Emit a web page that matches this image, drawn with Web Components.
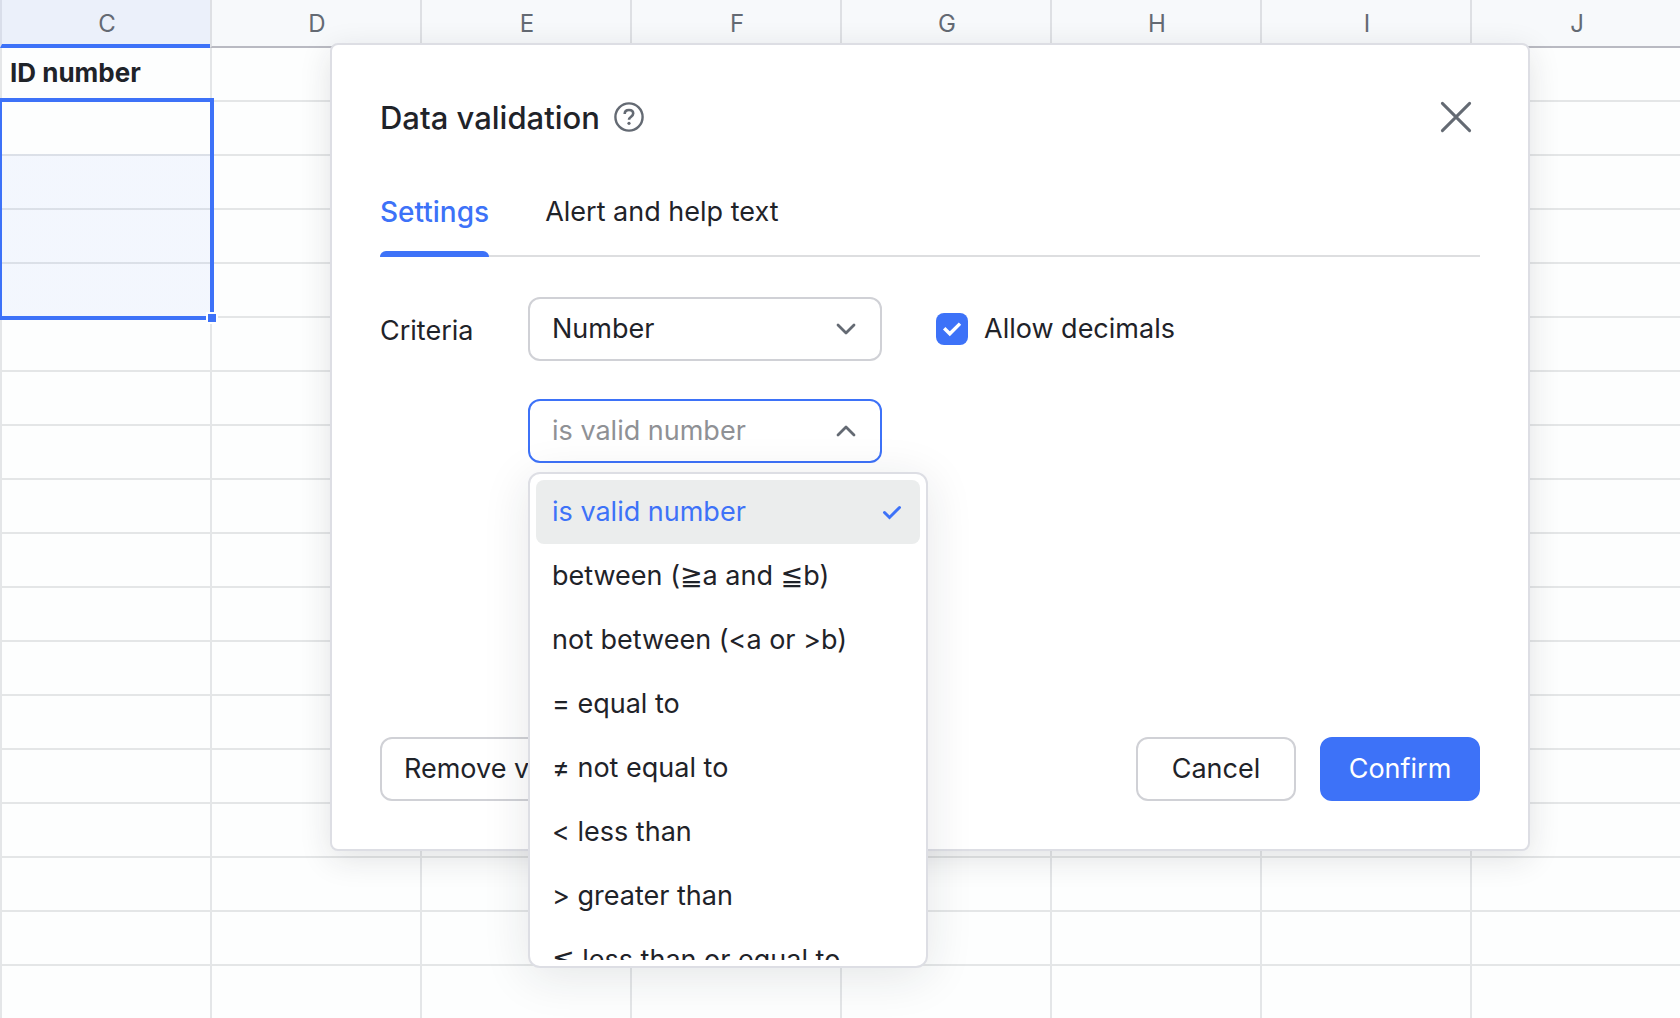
<!DOCTYPE html>
<html lang="en">
<head>
<meta charset="utf-8">
<title>Data validation</title>
<style>
  html, body { margin: 0; height: 100%; }
  body {
    --blue: #3d72f8;
    --ink: #1f2329;
    --muted: #646a73;
    --line: #d0d1d6;
    --edge: #dddee4;
    position: relative;
    overflow: hidden;
    background: #fff;
    color: var(--ink);
    font: 400 27px/40px Inter, "DejaVu Sans", "Noto Sans", sans-serif;
  }
</style>
</head>
<body>
<sheet-grid columns="C D E F G H I J" rows="18"></sheet-grid>
<validation-dialog>
  <span slot="title">Data validation</span>
  <tab-bar slot="tabs"></tab-bar>
  <criteria-form slot="body"></criteria-form>
  <ui-button slot="start">Remove validation</ui-button>
  <ui-button slot="end">Cancel</ui-button>
  <ui-button slot="end" kind="primary">Confirm</ui-button>
</validation-dialog>

<script>
const attach = (el, html) => { el.attachShadow({ mode: "open" }).innerHTML = html; };

customElements.define("sheet-grid", class extends HTMLElement {
  connectedCallback() {
    const cols = this.getAttribute("columns").split(" ");
    const rows = Number(this.getAttribute("rows"));
    const head = cols.map((c, i) => `<th scope="col"${i ? "" : ' class="active"'}>${c}</th>`).join("");
    let body = "";
    for (let r = 0; r < rows; r++) {
      body += "<tr>" + cols.map((c, i) => {
        if (i === 0 && r === 0) return '<td class="label">ID number</td>';
        if (i === 0 && r === 1) return '<td><div class="selection"><i></i></div></td>';
        return "<td></td>";
      }).join("") + "</tr>";
    }
    attach(this, `
      <style>
        :host { display: block; }
        table { width: 100%; table-layout: fixed; border-collapse: separate; border-spacing: 0; }
        th, td { box-sizing: border-box; padding: 0; border-left: 2px solid #e4e6e8; }
        th { height: 48px; padding: 2px 0 0 2px; font-size: 24px; line-height: 44px; font-weight: 400; color: var(--muted);
             background: #f7f9fb; border-left-color: #dee0e4; border-bottom: 2px solid #b9bac2; }
        th.active { padding-top: 4px; background: #ebf0fa; line-height: 40px; border-left-color: #d9deea;
                    border-bottom: 4px solid var(--blue); }
        td { height: 54px; line-height: 52px; position: relative; background: #fdfefe; border-bottom: 2px solid #e4e6e7; }
        .label { padding: 0 0 2px 8px; font-size: 26px; line-height: 50px; font-weight: 700; }
        .selection { position: absolute; z-index: 1; inset: -4px -4px auto; height: 222px; box-sizing: border-box;
                     border: 4px solid var(--blue);
                     background: linear-gradient(transparent 52px, rgba(61, 114, 248, .05) 0) padding-box; }
        .selection i { position: absolute; right: -8px; bottom: -8px; width: 8px; height: 8px;
                       border: 2px solid #fff; background: var(--blue); }
      </style>
      <table><thead><tr>${head}</tr></thead><tbody>${body}</tbody></table>`);
  }
});

customElements.define("ui-button", class extends HTMLElement {
  constructor() {
    super();
    attach(this, `
      <style>
        :host { display: block; }
        button { box-sizing: border-box; min-width: 160px; height: 64px; padding: 0 22px; border: 2px solid var(--line);
                 border-radius: 12px; background: #fff; color: var(--ink); font: inherit; }
        :host([kind="primary"]) button { background: var(--blue); border-color: var(--blue); color: #fff; }
      </style>
      <button type="button"><slot></slot></button>`);
  }
});

customElements.define("tab-bar", class extends HTMLElement {
  constructor() {
    super();
    attach(this, `
      <style>
        :host { display: block; border-bottom: 2px solid #dddee0; }
        div { display: flex; gap: 56px; margin-bottom: -2px; }
        button { position: relative; height: 90px; padding: 0; border: 0; background: none; color: inherit; font: inherit; }
        [aria-selected="true"] { color: var(--blue); font-size: 28px; font-weight: 500; }
        [aria-selected="true"]::after { content: ""; position: absolute; inset: auto 0 0; height: 6px;
                                        border-radius: 6px 6px 0 0; background: var(--blue); }
      </style>
      <div role="tablist">
        <button role="tab" type="button" aria-selected="true">Settings</button>
        <button role="tab" type="button" aria-selected="false">Alert and help text</button>
      </div>`);
  }
});

customElements.define("select-box", class extends HTMLElement {
  connectedCallback() {
    const open = this.hasAttribute("open");
    attach(this, `
      <style>
        :host { display: grid; align-items: center; position: relative; }
        select, svg { grid-area: 1 / 1; }
        select { box-sizing: border-box; width: 100%; height: 64px; padding: 0 60px 0 22px; border: 2px solid var(--line);
                 border-radius: 12px; appearance: none; background: #fff; color: var(--ink); font: inherit; opacity: 1; }
        :host([open]) select { border-color: var(--blue); color: #8f9195; }
        svg { justify-self: end; margin-right: 24px; pointer-events: none; }
      </style>
      <select aria-label="${this.getAttribute("label")}"><option>${this.getAttribute("value")}</option></select>
      <svg width="24" height="24" viewBox="0 0 24 24" fill="none" stroke="#646a73" stroke-width="2.8" stroke-linecap="round" stroke-linejoin="round">
        <path d="${open ? "M4 16l8-8 8 8" : "M4 8l8 8 8-8"}"/>
      </svg>
      <slot></slot>`);
  }
});

customElements.define("option-menu", class extends HTMLElement {
  constructor() {
    super();
    attach(this, `
      <style>
        :host { display: block; position: absolute; z-index: 2; top: 73px; left: 0; width: 400px; box-sizing: border-box;
                padding: 6px; border: 2px solid var(--edge); border-radius: 12px; background: #fff;
                box-shadow: 0 8px 48px rgba(31, 35, 41, .11); }
        div { height: 480px; overflow: hidden; }
      </style>
      <div role="listbox" aria-label="Condition"><slot></slot></div>`);
  }
});

customElements.define("menu-option", class extends HTMLElement {
  connectedCallback() {
    this.setAttribute("role", "option");
    attach(this, `
      <style>
        :host { display: flex; align-items: center; justify-content: space-between; height: 64px; box-sizing: border-box;
                padding: 0 16px; border-radius: 8px; white-space: nowrap; }
        :host([selected]) { background: #ebeded; color: var(--blue); }
        svg { display: none; }
        :host([selected]) svg { display: block; }
      </style>
      <span><slot></slot></span>
      <svg width="24" height="24" viewBox="0 0 24 24" fill="none" stroke="currentColor" stroke-width="3" stroke-linecap="round" stroke-linejoin="miter">
        <path d="M4.500 12.500l5 5L19.500 7.500"/>
      </svg>`);
  }
});

customElements.define("check-box", class extends HTMLElement {
  constructor() {
    super();
    attach(this, `
      <style>
        :host { display: block; }
        label { display: flex; align-items: center; gap: 16px; height: 64px; }
        span { display: grid; place-items: center; }
        input, svg { grid-area: 1 / 1; }
        input { appearance: none; width: 32px; height: 32px; margin: 0; border-radius: 8px; background: var(--blue); }
        svg { pointer-events: none; }
      </style>
      <label>
        <span><input type="checkbox" checked>
          <svg width="32" height="32" viewBox="0 0 32 32" fill="none" stroke="#fff" stroke-width="3.4"><path d="M8.2 15.2l5.6 5.6L24 10.6"/></svg>
        </span>
        <slot></slot>
      </label>`);
  }
});

customElements.define("criteria-form", class extends HTMLElement {
  constructor() {
    super();
    attach(this, `
      <style>
        :host { display: grid; grid-template-columns: 148px 354px 1fr; row-gap: 36px; align-items: start; }
        .name { padding-top: 2px; line-height: 64px; }
        select-box { grid-column: 2; }
        check-box { margin-left: 54px; }
      </style>
      <span class="name">Criteria</span>
      <select-box label="Criteria" value="Number"></select-box>
      <check-box>Allow decimals</check-box>
      <select-box label="Condition" value="is valid number" open>
        <option-menu>
          <menu-option selected>is valid number</menu-option>
          <menu-option>between (≧a and ≦b)</menu-option>
          <menu-option>not between (&lt;a or &gt;b)</menu-option>
          <menu-option>= equal to</menu-option>
          <menu-option>≠ not equal to</menu-option>
          <menu-option>&lt; less than</menu-option>
          <menu-option>&gt; greater than</menu-option>
          <menu-option>≦ less than or equal to</menu-option>
        </option-menu>
      </select-box>`);
  }
});

customElements.define("validation-dialog", class extends HTMLElement {
  constructor() {
    super();
    attach(this, `
      <style>
        :host { display: flex; flex-direction: column; position: absolute; z-index: 2; inset: 43px 150px auto 330px;
                box-sizing: border-box; padding: 48px; border: 2px solid var(--edge); border-radius: 8px;
                background: #fff; box-shadow: 0 8px 32px rgba(31, 35, 41, .12); }
        header, footer, .end { display: flex; align-items: center; }
        header { height: 48px; margin-bottom: 26px; gap: 14px; }
        h1 { margin: 0; padding-top: 2px; font-size: 31px; font-weight: 500; }
        button { display: grid; place-items: center; padding: 0; border: 0; background: none; color: var(--muted); }
        .close { width: 48px; height: 48px; margin-left: auto; }
        .body { min-height: 440px; padding-top: 40px; box-sizing: border-box; }
        footer { justify-content: space-between; margin-top: 40px; }
        .end { gap: 24px; }
      </style>
      <header>
        <h1><slot name="title"></slot></h1>
        <button type="button" aria-label="Help">
          <svg width="30" height="30" viewBox="0 0 30 30" fill="none" stroke="currentColor" stroke-width="2.4">
            <circle cx="15" cy="15" r="13.6"/>
            <path d="M10.700 12c0-2.600 1.800-4 4.300-4 2.500 0 4.200 1.400 4.200 3.600 0 3-4.200 3.200-4.200 6.200" stroke-width="2.600"/>
            <circle cx="15" cy="21.300" r="1.600" fill="currentColor" stroke="none"/>
          </svg>
        </button>
        <button class="close" type="button" aria-label="Close">
          <svg width="32" height="32" viewBox="0 0 32 32" fill="none" stroke="currentColor" stroke-width="3" stroke-linecap="round"><path d="M2.400 2.400l27.200 27.200M29.600 2.400L2.400 29.600"/></svg>
        </button>
      </header>
      <slot name="tabs"></slot>
      <div class="body"><slot name="body"></slot></div>
      <footer><slot name="start"></slot><div class="end"><slot name="end"></slot></div></footer>`);
  }
});
</script>
</body>
</html>
